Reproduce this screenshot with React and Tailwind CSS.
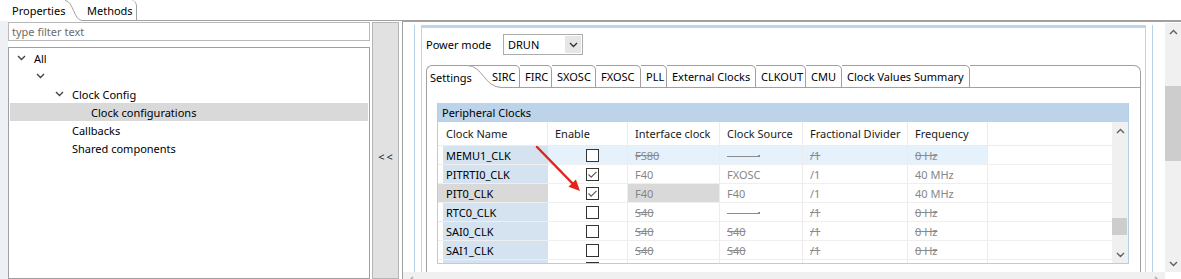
import React from 'react';

const Chevron = ({ dir = 'down', color = '#444' }) => {
  const d = {
    down: 'M1 1l3.5 3.5L8 1',
    up: 'M1 5l3.5-3.5L8 5',
    left: 'M5 1L1.5 4.5L5 8',
    right: 'M1 1l3.5 3.5L1 8',
  }[dir];
  const vertical = dir === 'left' || dir === 'right';
  return (
    <svg width={vertical ? 6 : 9} height={vertical ? 9 : 6} viewBox={vertical ? '0 0 6 9' : '0 0 9 6'}>
      <path d={d} fill="none" stroke={color} strokeWidth="1.4" />
    </svg>
  );
};

// tree in the Properties view
const treeRows = [
  { indent: 'pl-[7px]', label: 'All', open: true },
  { indent: 'pl-[26px]', label: '', open: true },
  { indent: 'pl-[45px]', label: 'Clock Config', open: true },
  { indent: 'pl-[64px]', label: 'Clock configurations', selected: true },
  { indent: 'pl-[45px]', label: 'Callbacks' },
  { indent: 'pl-[45px]', label: 'Shared components' },
];

const clockTabs = [
  { label: 'SIRC', w: 'w-[33px]' },
  { label: 'FIRC', w: 'w-[32px]' },
  { label: 'SXOSC', w: 'w-[44px]' },
  { label: 'FXOSC', w: 'w-[45px]' },
  { label: 'PLL', w: 'w-[26px]' },
  { label: 'External Clocks', w: 'w-[89px]' },
  { label: 'CLKOUT', w: 'w-[50px]' },
  { label: 'CMU', w: 'w-[36px]' },
  { label: 'Clock Values Summary', w: 'w-[128px]' },
];

const rows = [
  { name: 'MEMU1_CLK', on: false, iface: 'FS80', src: null, div: '/1', freq: '0 Hz', off: true, hover: true },
  { name: 'PITRTI0_CLK', on: true, iface: 'F40', src: 'FXOSC', div: '/1', freq: '40 MHz' },
  { name: 'PIT0_CLK', on: true, iface: 'F40', src: 'F40', div: '/1', freq: '40 MHz', selected: true },
  { name: 'RTC0_CLK', on: false, iface: 'S40', src: null, div: '/1', freq: '0 Hz', off: true },
  { name: 'SAI0_CLK', on: false, iface: 'S40', src: 'S40', div: '/1', freq: '0 Hz', off: true },
  { name: 'SAI1_CLK', on: false, iface: 'S40', src: 'S40', div: '/1', freq: '0 Hz', off: true },
];

const CheckBox = ({ on }) => (
  <span className="flex h-[13px] w-[13px] items-center justify-center border border-[#333] bg-white">
    {on && (
      <svg width="11" height="11" viewBox="0 0 11 11">
        <path d="M1.5 5.5l2.7 2.7L9.5 2.8" fill="none" stroke="#5a5a5a" strokeWidth="1.2" />
      </svg>
    )}
  </span>
);

const Cell = ({ w, children, className = '' }) => (
  <div className={`flex h-full shrink-0 items-center border-r border-[#ececec] pl-[7px] ${w} ${className}`}>
    {children}
  </div>
);

const Data = ({ off, children }) => (
  <span className={off ? 'text-[#8a8a8a] line-through' : 'text-[#868686]'}>{children}</span>
);

export default function App() {
  return (
    <div className="relative flex h-[279px] w-[1181px] flex-col overflow-hidden bg-white font-['Noto_Sans',sans-serif] text-[11px] leading-none text-black">
      {/* view tabs */}
      <div className="flex h-[21px] shrink-0">
        <div className="flex w-[65px] items-center pl-[12px]">Properties</div>
        <svg width="17" height="21" viewBox="0 0 17 21" className="shrink-0">
          <path d="M0 0.5C8 0.5 9 20.5 17 20.5" fill="none" stroke="#a0a0a0" />
        </svg>
        <div className="flex w-[55px] items-center rounded-tr-[6px] border-r border-b border-[#a0a0a0] pl-[5px]">Methods</div>
        <div className="flex-1 border-b border-[#a0a0a0]" />
      </div>

      <div className="flex min-h-0 flex-1">
        {/* Properties view */}
        <div className="flex w-[370px] shrink-0">
          <div className="w-[8px] bg-[#edf0f5]" />
          <div className="flex flex-1 flex-col">
            <div className="mt-px flex h-[19px] items-center border border-[#b9b9b9] pl-[3px] text-[#6d6d6d]">
              type filter text
            </div>
            <div className="mt-[6px] flex-1 border border-[#a0a0a0] pt-px">
              {treeRows.map((r, i) => (
                <div
                  key={i}
                  className={`mx-px flex h-[18px] items-center ${r.indent} ${r.selected ? 'bg-[#d9d9d9]' : ''}`}
                >
                  <span className="mr-[8px] flex w-[9px] justify-center">{r.open && <Chevron dir="down" />}</span>
                  <span>{r.label}</span>
                </div>
              ))}
            </div>
          </div>
        </div>

        {/* collapse strip */}
        <div className="ml-[2px] mt-px flex w-[27px] shrink-0 flex-col items-center border border-[#b5b5b5] bg-[#e1e1e1] pt-[128px] text-[#222]">
          <span className="tracking-[2px] pl-[2px]">&lt;&lt;</span>
        </div>

        {/* editor */}
        <div className="ml-[3px] flex min-w-0 flex-1 flex-col border-l border-t border-[#a0a0a0]">
          <div className="flex h-[250px] shrink-0">
            <div className="min-w-0 flex-1 overflow-hidden pl-[11px] pr-[12px]">
              <div className="h-full border-x border-[#b8d0e8] px-[6px]">
                <div className="mt-[3px] border-x border-t-[3px] border-[#bcd4ec] px-[4px] pt-[6px]">
                  {/* power mode */}
                  <div className="flex h-[21px] items-center">
                    <span className="w-[77px]">Power mode</span>
                    <div className="flex h-[21px] w-[80px] border border-[#acacac]">
                      <span className="flex flex-1 items-center pl-[4px]">DRUN</span>
                      <span className="m-px flex w-[16px] items-center justify-center bg-[#e6e6e6]">
                        <Chevron dir="down" color="#333" />
                      </span>
                    </div>
                  </div>

                  {/* tab folder */}
                  <div className="mt-[10px]">
                    <div className="flex h-[23px]">
                      <div className="relative z-10 flex w-[61px] shrink-0 items-center rounded-tl-[6px] border-l border-t border-[#a0a0a0] bg-white pl-[3px]">
                        <span className="relative z-20 whitespace-nowrap">Settings</span>
                        <svg
                          width="35"
                          height="23"
                          viewBox="0 0 35 23"
                          className="absolute left-[40px] top-[-1px]"
                        >
                          <path d="M0 0.5C16 0.5 17 22.5 35 22.5L35 23L0 23Z" fill="#fff" />
                          <path d="M0 0.5C16 0.5 17 22.5 35 22.5" fill="none" stroke="#a0a0a0" />
                        </svg>
                      </div>
                      {clockTabs.map((t) => (
                        <div
                          key={t.label}
                          className={`flex shrink-0 items-center whitespace-nowrap rounded-tr-[5px] border-y border-r border-[#a0a0a0] pl-[5px] ${t.w}`}
                        >
                          {t.label}
                        </div>
                      ))}
                      <div className="flex-1 rounded-tr-[7px] border-y border-r border-[#a0a0a0]" />
                    </div>

                    <div className="h-[200px] border-x border-[#a0a0a0] pl-[10px] pt-[15px]">
                      {/* Peripheral Clocks group */}
                      <div className="w-[692px] border-x border-b border-[#b6cde5]">
                        <div className="flex h-[19px] items-center bg-[#bcd3ea] pl-[4px]">Peripheral Clocks</div>
                        <div className="flex h-[141px] overflow-hidden">
                          <div className="min-w-0 flex-1">
                            <div className="flex h-[24px] border-b border-[#ececec] text-[#1a1a1a]">
                              <Cell w="w-[110px]" className="pl-[8px]">Clock Name</Cell>
                              <Cell w="w-[80px]">Enable</Cell>
                              <Cell w="w-[92px]">Interface clock</Cell>
                              <Cell w="w-[83px]" className="pl-[6px]">Clock Source</Cell>
                              <Cell w="w-[105px]" className="pl-[6px]">Fractional Divider</Cell>
                              <Cell w="w-[80px]">Frequency</Cell>
                            </div>
                            {rows.map((r) => (
                              <div key={r.name} className="flex h-[19px] border-b border-[#efefef]">
                                <div
                                  className={`flex h-full w-[110px] shrink-0 ${r.selected ? 'bg-[#d9d9d9]' : 'pl-[5px]'}`}
                                >
                                  <span
                                    className={`flex flex-1 items-center ${r.selected ? 'pl-[8px]' : 'bg-[#d5e3f1] pl-[3px]'}`}
                                  >
                                    {r.name}
                                  </span>
                                </div>
                                <div className={`flex ${r.hover ? 'bg-[#e5f1fb]' : ''}`}>
                                  <Cell w="w-[80px]" className="pl-[38px]">
                                    <CheckBox on={r.on} />
                                  </Cell>
                                  <Cell w="w-[92px]" className={r.selected ? 'bg-[#d9d9d9]' : ''}>
                                    <Data off={r.off}>{r.iface}</Data>
                                  </Cell>
                                  <Cell w="w-[83px]" className="pl-[6px]">
                                    {r.src ? (
                                      <Data off={r.off}>{r.src}</Data>
                                    ) : (
                                      <span className="mt-[2px] flex items-center">
                                        <span className="h-px w-[31px] bg-[#8c8c8c]" />
                                        <span className="h-[2px] w-[2px] bg-[#8c8c8c]" />
                                      </span>
                                    )}
                                  </Cell>
                                  <Cell w="w-[105px]" className="pl-[6px]">
                                    <Data off={r.off}>{r.div}</Data>
                                  </Cell>
                                  <Cell w="w-[80px]">
                                    <Data off={r.off}>{r.freq}</Data>
                                  </Cell>
                                </div>
                              </div>
                            ))}
                            {/* next row, scrolled mostly out of view */}
                            <div className="flex h-[19px]">
                              <div className="w-[110px] shrink-0 pl-[5px]">
                                <div className="h-full bg-[#d5e3f1]" />
                              </div>
                              <Cell w="w-[80px]" className="items-start pl-[38px] pt-[2px]">
                                <CheckBox on={false} />
                              </Cell>
                              <Cell w="w-[92px]" />
                              <Cell w="w-[83px]" />
                              <Cell w="w-[105px]" />
                              <Cell w="w-[80px]" />
                            </div>
                          </div>
                          {/* table scrollbar */}
                          <div className="flex w-[16px] shrink-0 flex-col bg-[#f0f0f0]">
                            <div className="flex h-[17px] items-center justify-center">
                              <Chevron dir="up" color="#606060" />
                            </div>
                            <div className="h-[79px]" />
                            <div className="h-[17px] w-[15px] bg-[#cdcdcd]" />
                            <div className="flex-1" />
                            <div className="flex h-[17px] items-center justify-center">
                              <Chevron dir="down" color="#606060" />
                            </div>
                          </div>
                        </div>
                      </div>
                    </div>
                  </div>
                </div>
              </div>
            </div>

            {/* editor vertical scrollbar */}
            <div className="mt-px flex w-[16px] shrink-0 flex-col bg-[#f0f0f0]">
              <div className="flex h-[17px] items-center justify-center">
                <Chevron dir="up" color="#606060" />
              </div>
              <div className="h-[46px]" />
              <div className="h-[75px] w-[16px] bg-[#cdcdcd]" />
              <div className="flex-1" />
              <div className="flex h-[17px] items-center justify-center">
                <Chevron dir="down" color="#606060" />
              </div>
            </div>
          </div>

          {/* editor horizontal scrollbar */}
          <div className="mr-[16px] flex h-[16px] shrink-0 items-center justify-between bg-[#f0f0f0] px-[5px]">
            <Chevron dir="left" color="#a0a0a0" />
            <Chevron dir="right" color="#a0a0a0" />
          </div>
        </div>
      </div>

      {/* red annotation arrow */}
      <svg width="60" height="60" viewBox="0 0 60 60" className="pointer-events-none absolute left-[530px] top-[140px]">
        <path d="M7 7L45 46" stroke="#e3241b" strokeWidth="2.5" strokeLinecap="round" />
        <path d="M50 51L38.5 46.8L45.9 39.4Z" fill="#e3241b" />
      </svg>
    </div>
  );
}
